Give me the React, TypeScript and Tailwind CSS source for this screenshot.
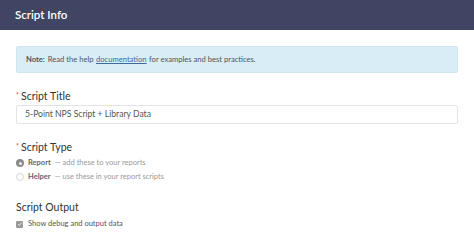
import React from "react";

function Label({ children, required }: { children: React.ReactNode; required?: boolean }) {
  return (
    <div className="relative text-[10.5px] leading-[12px] text-[#333]">
      {required && <span className="absolute -left-[5px] -top-[1px] text-[7px] text-[#d9534f]">*</span>}
      {children}
    </div>
  );
}

function Radio({ checked, name, hint }: { checked?: boolean; name: string; hint: string }) {
  return (
    <div className="flex items-center gap-[4px] text-[7.5px] leading-[10px]">
      <span
        className={
          checked
            ? "flex h-[8px] w-[8px] items-center justify-center rounded-full bg-[#8a8a8a]"
            : "h-[8px] w-[8px] rounded-full border border-[#d4d4d4] bg-white"
        }
      >
        {checked && <span className="h-[3px] w-[3px] rounded-full bg-[#eee]" />}
      </span>
      <span className="font-bold text-[#666]">{name}</span>
      <span className="text-[#999]">— {hint}</span>
    </div>
  );
}

export default function App() {
  return (
    <div className="h-[245px] w-[474px] bg-white" style={{ fontFamily: "Lato, 'Open Sans', sans-serif" }}>
      <div className="flex h-[30px] items-center bg-[#3f4562] px-[15px] text-[11.5px] font-semibold text-white">
        Script Info
      </div>

      <div className="px-[16px] pt-[16px]">
        <div className="flex h-[27px] items-center rounded-[2px] border border-[#cfe6f2] bg-[#d9edf7] px-[9px] text-[7.6px] text-[#4a5560]">
          <span className="mr-[3px] font-bold">Note:</span> Read the help
          <a className="mx-[2.5px] text-[#3b6b9c] underline">documentation</a>
          for examples and best practices.
        </div>

        <div className="mt-[17px] pl-[5px]">
          <Label required>Script Title</Label>
        </div>
        <div className="mt-[3px] flex h-[19px] items-center rounded-[2px] border border-[#e3e3e3] px-[8px] text-[8.6px] text-[#555]">
          5-Point NPS Script + Library Data
        </div>

        <div className="mt-[17px] pl-[5px]">
          <Label required>Script Type</Label>
        </div>
        <div className="mt-[5px] flex flex-col gap-[4px]">
          <Radio checked name="Report" hint="add these to your reports" />
          <Radio name="Helper" hint="use these in your report scripts" />
        </div>

        <div className="mt-[19px] text-[10.5px] leading-[12px] text-[#333]">Script Output</div>
        <div className="mt-[6px] flex items-center gap-[5px] text-[7.5px] leading-[10px] text-[#555]">
          <span className="flex h-[7px] w-[7px] items-center justify-center rounded-[1px] bg-[#9a9a9a]">
            <svg viewBox="0 0 8 8" className="h-[6px] w-[6px]">
              <path d="M1.5 4.2 L3.2 5.8 L6.5 2" stroke="#eee" strokeWidth="1.2" fill="none" />
            </svg>
          </span>
          Show debug and output data
        </div>
      </div>
    </div>
  );
}
